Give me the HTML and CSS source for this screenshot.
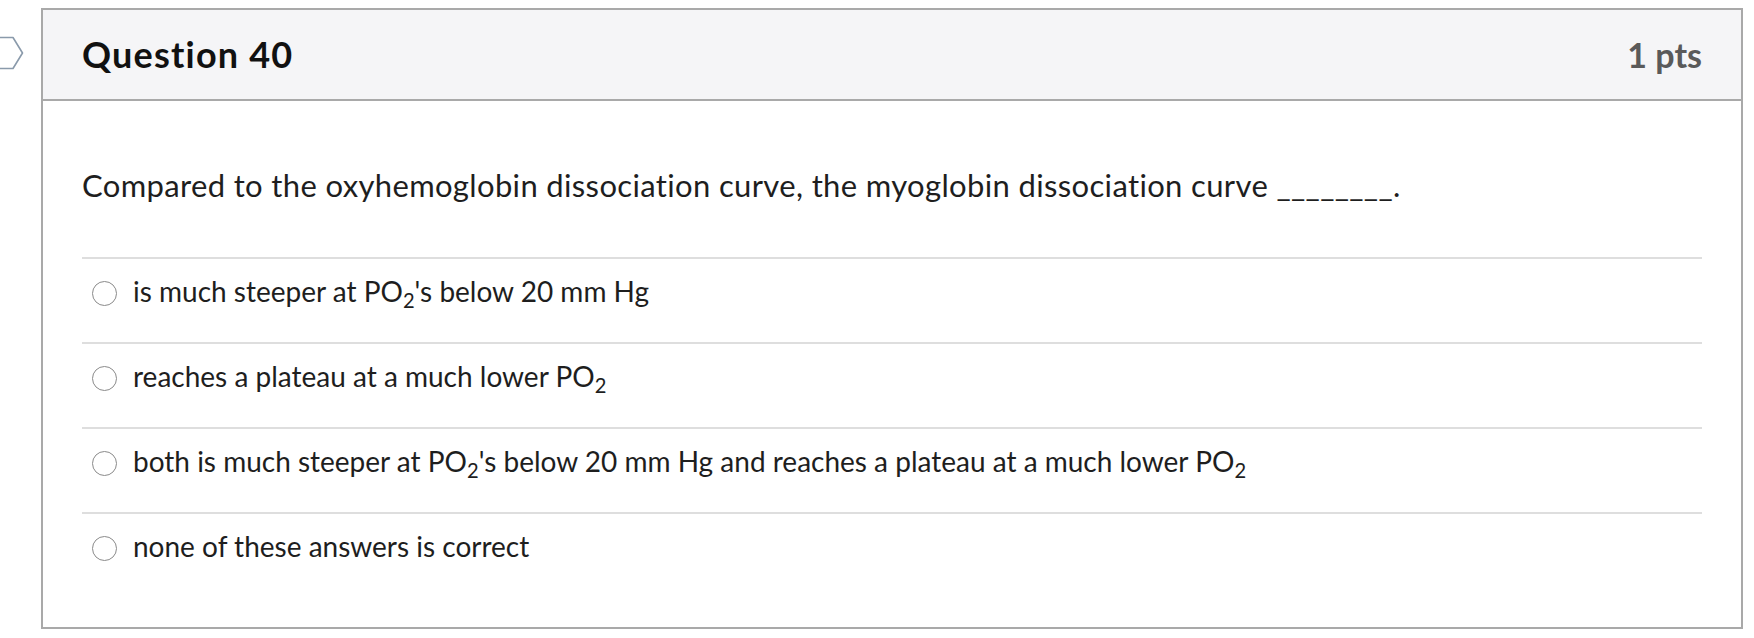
FILE: index.html
```html
<!DOCTYPE html>
<html lang="en">
<head>
<meta charset="utf-8">
<title>Question 40</title>
<link rel="stylesheet" href="styles.css">
</head>
<body>
<div class="page">
  <svg class="flag" width="26" height="34" viewBox="0 0 26 34" aria-hidden="true">
    <path d="M-6 1.5 H13 L22.5 17 L13 32.5 H-6" fill="none" stroke="#8a9aab" stroke-width="1.6" stroke-linejoin="round"/>
  </svg>
  <div class="card">
    <div class="card-header">
      <h2 class="q-title">Question 40</h2>
      <span class="q-points">1 pts</span>
    </div>
    <div class="card-body">
      <p class="q-text">Compared to the oxyhemoglobin dissociation curve, the myoglobin dissociation curve ________.</p>
      <div class="answers">
        <label class="answer"><span class="radio"></span><span class="answer-text">is much steeper at PO<sub>2</sub>'s below 20 mm Hg</span></label>
        <label class="answer"><span class="radio"></span><span class="answer-text">reaches a plateau at a much lower PO<sub>2</sub></span></label>
        <label class="answer"><span class="radio"></span><span class="answer-text">both is much steeper at PO<sub>2</sub>'s below 20 mm Hg and reaches a plateau at a much lower PO<sub>2</sub></span></label>
        <label class="answer"><span class="radio"></span><span class="answer-text">none of these answers is correct</span></label>
      </div>
    </div>
  </div>
</div>
</body>
</html>
```

FILE: styles.css
```css
* { box-sizing: border-box; }
html, body { margin: 0; padding: 0; background: #ffffff; }
body {
  font-family: Lato, "Liberation Sans", Arial, sans-serif;
  color: #1e1e1e;
}
.page {
  position: relative;
  padding: 8px 11px 0 41px;
}
.flag {
  position: absolute;
  left: 0;
  top: 36px;
}
.card {
  border: 2px solid #a9a9a9;
  background: #fff;
}
.card-header {
  display: flex;
  justify-content: space-between;
  align-items: center;
  height: 91px;
  padding: 0 39px;
  background: #f5f5f7;
  border-bottom: 2px solid #a9a9a9;
}
.q-title {
  margin: 0;
  font-size: 36px;
  font-weight: 700;
  letter-spacing: 1.2px;
  line-height: 89px;
  color: #111;
}
.q-points {
  font-size: 34px;
  font-weight: 700;
  line-height: 89px;
  color: #5a5a5a;
}
.card-body {
  padding: 66px 39px 30px 39px;
}
.q-text {
  margin: 0 0 54px 0;
  font-size: 31px;
  letter-spacing: 0.35px;
  line-height: 36px;
}
.answer {
  display: flex;
  align-items: flex-start;
  border-top: 2px solid #dedede;
  padding: 17px 0 36px 10px;
  font-size: 28px;
  line-height: 30px;
}
.radio {
  flex: none;
  width: 25px;
  height: 25px;
  margin-top: 5px;
  margin-right: 16px;
  border: 1.5px solid #8a8a8a;
  border-radius: 50%;
  background: #fff;
}
.answer-text sub {
  font-size: 0.72em;
  line-height: 0;
  vertical-align: -0.3em;
}
```
